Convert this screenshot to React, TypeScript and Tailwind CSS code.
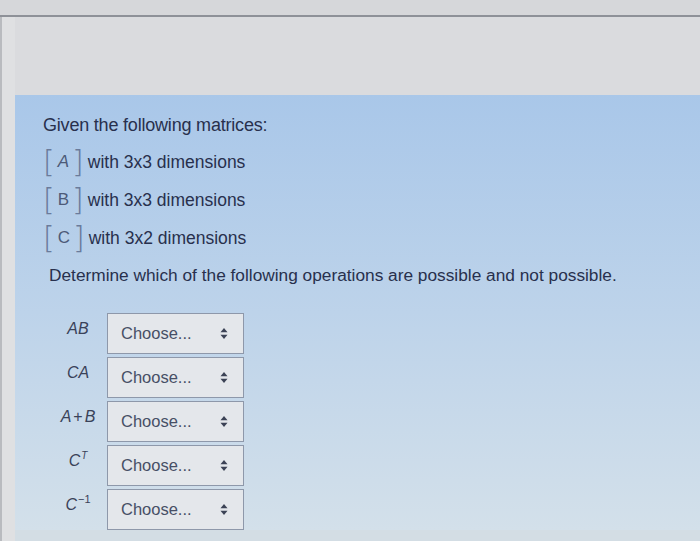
import React from "react";

const rows: { key: string; label: React.ReactNode }[] = [
  { key: "ab", label: <span className="italic">AB</span> },
  { key: "ca", label: <span className="italic">CA</span> },
  {
    key: "apb",
    label: (
      <span>
        <span className="italic">A</span>
        <span className="mx-[2px]">+</span>
        <span className="italic">B</span>
      </span>
    ),
  },
  {
    key: "ct",
    label: (
      <span>
        <span className="italic">C</span>
        <sup className="relative -top-[7px] ml-[1px] text-[10px] italic">T</sup>
      </span>
    ),
  },
  {
    key: "cinv",
    label: (
      <span>
        <span className="italic">C</span>
        <sup className="relative -top-[7px] ml-[1px] text-[11px]">−1</sup>
      </span>
    ),
  },
];

function Arrows() {
  return (
    <svg width="8" height="11" viewBox="0 0 8 11" className="shrink-0">
      <path d="M4 0 L7.5 4.2 H0.5 Z" fill="#3b4255" />
      <path d="M4 11 L7.5 6.8 H0.5 Z" fill="#3b4255" />
    </svg>
  );
}

function Select() {
  return (
    <div className="flex h-[41px] w-[137px] items-center justify-between border border-[#8e98aa] bg-[#e4e7eb] pl-[13px] pr-[15px] text-[16.5px] text-[#474f66]">
      <span>Choose...</span>
      <Arrows />
    </div>
  );
}

function Matrix({ name, italic, dims }: { name: string; italic?: boolean; dims: string }) {
  return (
    <div className="flex h-[38px] items-center text-[17.5px]">
      <span className="text-[30px] font-extralight leading-none text-[#6a7b9b] [font-family:'DejaVu_Sans',sans-serif]">[</span>
      <span className={`mx-[3px] text-[17px] text-[#4d5a78] ${italic ? "italic" : ""}`}>{name}</span>
      <span className="text-[30px] font-extralight leading-none text-[#6a7b9b] [font-family:'DejaVu_Sans',sans-serif]">]</span>
      <span className="ml-[4px]">with {dims} dimensions</span>
    </div>
  );
}

export default function App() {
  return (
    <div className="flex h-[541px] w-[700px] flex-col overflow-hidden bg-[#d9dadd] [font-family:'Liberation_Sans',Arial,sans-serif]">
      {/* top chrome with divider */}
      <div className="h-[17px] shrink-0 border-b-2 border-[#8e9198] bg-[#d6d7da]" />
      <div className="flex min-h-0 flex-1">
        <div className="w-[15px] shrink-0 border-l-2 border-[#b9bbbf] bg-[#dfe0e2]" />
        <div className="flex min-h-0 flex-1 flex-col">
          <div className="h-[78px] shrink-0 bg-[#dadbde]" />
          {/* question panel */}
          <div className="flex-1 bg-gradient-to-b from-[#a9c7e9] via-[#bdd3ea] to-[#d3e0ea] pl-[28px] pt-[12px] text-[#28304d]">
            <div className="flex h-[36px] items-center text-[18px] tracking-[-0.2px]">Given the following matrices:</div>
            <Matrix name="A" italic dims="3x3" />
            <Matrix name="B" dims="3x3" />
            <Matrix name="C" dims="3x2" />
            <div className="ml-[6px] flex h-[38px] items-center text-[17.3px]">
              Determine which of the following operations are possible and not possible.
            </div>
            <div className="mt-[18px] flex flex-col gap-[3px] pl-[6px]">
              {rows.map((r) => (
                <div key={r.key} className="flex items-start">
                  <div className="flex w-[58px] justify-center pt-[4px] text-[16px] text-[#3a4259]">{r.label}</div>
                  <Select />
                </div>
              ))}
            </div>
          </div>
          <div className="h-[12px] shrink-0 bg-[#d3dde4]" />
        </div>
      </div>
    </div>
  );
}
